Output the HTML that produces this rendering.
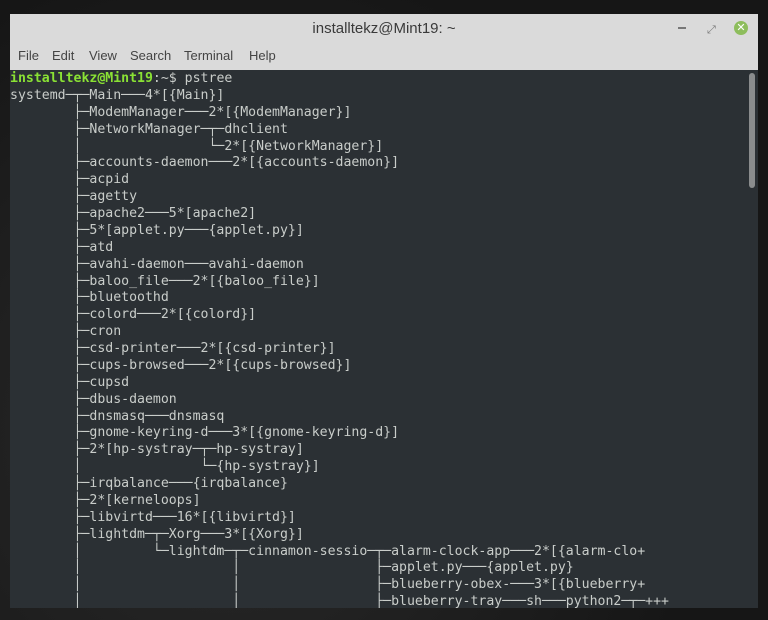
<!DOCTYPE html>
<html><head><meta charset="utf-8"><style>
html,body{margin:0;padding:0;width:768px;height:620px;overflow:hidden;background:#1f1f1f;}
body{background:radial-gradient(circle at 30% 70%,#2a2a2a,#161616 70%);position:relative;}
.win{position:absolute;left:10px;top:14px;width:748px;height:594px;background:#dadada;}
.title{position:absolute;left:0;right:0;top:6px;text-align:center;font:15px "Liberation Sans",sans-serif;color:#3a3a3a;}
.menu{position:absolute;top:34px;font:13px "Liberation Sans",sans-serif;color:#444;}
.term{position:absolute;left:0;top:56px;width:748px;height:538px;background:#2b3034;overflow:hidden;}
pre{margin:0;position:absolute;left:0;top:1px;font:13.2px/16.87px "DejaVu Sans Mono",monospace;color:#c9cdca;}
.g{color:#8ae234;font-weight:bold}
.sb{position:absolute;left:739px;top:3px;width:6px;height:115px;background:#8a8c8d;border-radius:3px;}
.close{position:absolute;left:724px;top:7px;width:14px;height:14px;border-radius:50%;background:#8dbd5c;color:#fff;font:bold 11px/14px "DejaVu Sans",sans-serif;text-align:center;}
.min{position:absolute;left:668px;top:13px;width:8px;height:2px;background:#777;}
.max{position:absolute;left:697px;top:9px;font:11px "DejaVu Sans",sans-serif;color:#777;}
</style></head><body>
<div class="win">
<div class="title">installtekz@Mint19: ~</div>
<div class="min"></div><div class="max">⤢</div><div class="close">✕</div>
<div class="menu" style="left:8px">File</div>
<div class="menu" style="left:42px">Edit</div>
<div class="menu" style="left:79px">View</div>
<div class="menu" style="left:120px">Search</div>
<div class="menu" style="left:174px">Terminal</div>
<div class="menu" style="left:239px">Help</div>
<div class="term"><pre><span class="g">installtekz@Mint19</span>:~$ pstree
systemd─┬─Main───4*[{Main}]
        ├─ModemManager───2*[{ModemManager}]
        ├─NetworkManager─┬─dhclient
        │                └─2*[{NetworkManager}]
        ├─accounts-daemon───2*[{accounts-daemon}]
        ├─acpid
        ├─agetty
        ├─apache2───5*[apache2]
        ├─5*[applet.py───{applet.py}]
        ├─atd
        ├─avahi-daemon───avahi-daemon
        ├─baloo_file───2*[{baloo_file}]
        ├─bluetoothd
        ├─colord───2*[{colord}]
        ├─cron
        ├─csd-printer───2*[{csd-printer}]
        ├─cups-browsed───2*[{cups-browsed}]
        ├─cupsd
        ├─dbus-daemon
        ├─dnsmasq───dnsmasq
        ├─gnome-keyring-d───3*[{gnome-keyring-d}]
        ├─2*[hp-systray─┬─hp-systray]
        │               └─{hp-systray}]
        ├─irqbalance───{irqbalance}
        ├─2*[kerneloops]
        ├─libvirtd───16*[{libvirtd}]
        ├─lightdm─┬─Xorg───3*[{Xorg}]
        │         └─lightdm─┬─cinnamon-sessio─┬─alarm-clock-app───2*[{alarm-clo+
        │                   │                 ├─applet.py───{applet.py}
        │                   │                 ├─blueberry-obex-───3*[{blueberry+
        │                   │                 ├─blueberry-tray───sh───python2─┬─+++
        │                   │                 │</pre><div class="sb"></div></div>
</div>
</body></html>
